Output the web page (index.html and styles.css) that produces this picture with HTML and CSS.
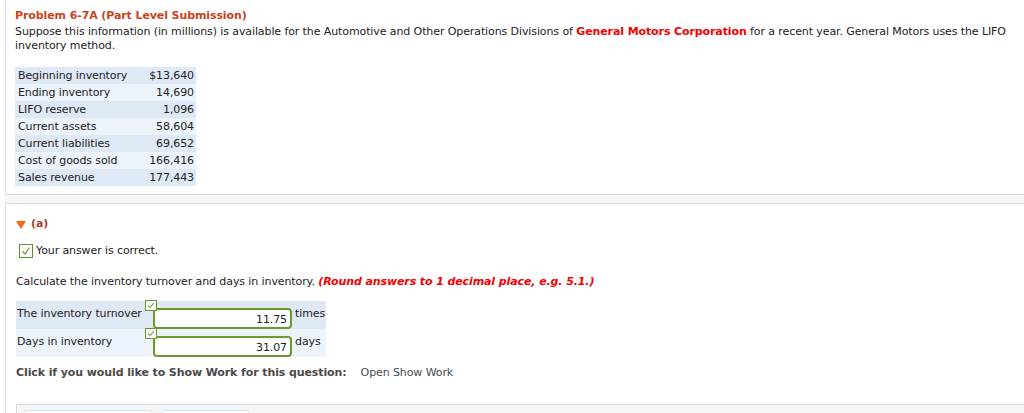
FILE: index.html
```html
<!DOCTYPE html>
<html>
<head>
<meta charset="utf-8">
<link rel="stylesheet" href="styles.css">
</head>
<body>
<div class="page">
  <section class="card card-top">
    <h1 class="title">Problem 6-7A (Part Level Submission)</h1>
    <p class="intro">Suppose this information (in millions) is available for the Automotive and Other Operations Divisions of <span class="company">General Motors Corporation</span> for a recent year. General Motors uses the LIFO inventory method.</p>
    <table class="data">
      <tr><td>Beginning inventory</td><td class="num">$13,640</td></tr>
      <tr><td>Ending inventory</td><td class="num">14,690</td></tr>
      <tr><td>LIFO reserve</td><td class="num">1,096</td></tr>
      <tr><td>Current assets</td><td class="num">58,604</td></tr>
      <tr><td>Current liabilities</td><td class="num">69,652</td></tr>
      <tr><td>Cost of goods sold</td><td class="num">166,416</td></tr>
      <tr><td>Sales revenue</td><td class="num">177,443</td></tr>
    </table>
  </section>
  <div class="gap"></div>
  <section class="card card-part">
    <div class="part-head"><span class="tri"></span><span class="part-label">(a)</span></div>
    <div class="correct">
      <svg class="checkbox" width="14" height="14" viewBox="0 0 14 14"><rect x="0.5" y="0.5" width="13" height="13" fill="#fff" stroke="#5e8f2b"/><path d="M3.5 7.2 L6 10 L10.5 3.5" fill="none" stroke="#6aa32e" stroke-width="1.3"/></svg>
      <span>Your answer is correct.</span>
    </div>
    <p class="question">Calculate the inventory turnover and days in inventory. <em class="hint">(Round answers to 1 decimal place, e.g. 5.1.)</em></p>
    <table class="answers">
      <tr class="row-a">
        <td class="lbl">The inventory turnover</td>
        <td class="field">
          <div class="field-wrap">
            <svg class="mini-check" width="12" height="11" viewBox="0 0 12 11"><rect x="0.5" y="0.5" width="11" height="10" fill="#fff" stroke="#6a9a2a"/><path d="M3 5.5 L5 7.5 L9 3" fill="none" stroke="#7cb342" stroke-width="1.2"/></svg>
            <div class="input">11.75</div>
          </div>
        </td>
        <td class="unit">times</td>
      </tr>
      <tr class="row-b">
        <td class="lbl">Days in inventory</td>
        <td class="field">
          <div class="field-wrap">
            <svg class="mini-check" width="12" height="11" viewBox="0 0 12 11"><rect x="0.5" y="0.5" width="11" height="10" fill="#fff" stroke="#6a9a2a"/><path d="M3 5.5 L5 7.5 L9 3" fill="none" stroke="#7cb342" stroke-width="1.2"/></svg>
            <div class="input">31.07</div>
          </div>
        </td>
        <td class="unit">days</td>
      </tr>
    </table>
    <div class="showwork"><strong>Click if you would like to Show Work for this question:</strong><span class="open">Open Show Work</span></div>
    <div class="bottom-box">
      <span class="btn btn-wide"></span><span class="btn btn-narrow"></span>
    </div>
  </section>
</div>
</body>
</html>
```
FILE: styles.css
```css
* { box-sizing: border-box; }
html, body { margin: 0; padding: 0; background: #fff; }
body {
  font-family: "DejaVu Sans", Verdana, sans-serif;
  font-size: 11px;
  line-height: 14px;
  letter-spacing: -0.1px;
  color: #222;
}
.page { padding-left: 5px; width: 1030px; }
.card { border-left: 1px solid #d8e0e9; background: #fff; }
.card-top { padding: 9px 10px 8px 9px; border-bottom: 1px solid #d3dce6; }
.title { margin: 0; font-size: 11px; line-height: 14px; font-weight: bold; color: #c9431c; }
.intro { margin: 2px 0 0; width: 1008px; }
.company { color: #f40000; font-weight: bold; }
.data { border-collapse: collapse; margin-top: 14px; width: 181px; }
.data td { height: 17px; padding: 0 3px; line-height: 17px; white-space: nowrap; }
.data tr:nth-child(odd) { background: #dfe8f5; }
.data tr:nth-child(even) { background: #edf3fb; }
.data .num { text-align: right; padding-right: 2px; }
.gap { height: 8px; background: #f4f7fa; }
.card-part { border-top: 1px solid #d3dce6; padding: 10px 0 0 10px; }
.part-head { display: flex; align-items: center; height: 14px; margin-top: 3px; }
.tri { width: 0; height: 0; border-left: 5px solid transparent; border-right: 5px solid transparent; border-top: 8px solid #f76a0c; margin-right: 5px; margin-top: 1px; }
.part-label { color: #b23c2c; font-weight: bold; }
.correct { display: flex; align-items: center; margin-top: 13px; margin-left: 3px; height: 14px; }
.checkbox { margin-right: 3px; display: block; }
.question { margin: 17px 0 0; }
.hint { color: #f40000; font-weight: bold; }
.answers { border-collapse: collapse; margin-top: 12px; width: 310px; }
.answers td { padding: 0; height: 27px; vertical-align: top; }
.row-a { background: #dfe8f5; }
.row-b { background: #edf3fb; }
.lbl { padding-left: 1px !important; padding-top: 6px !important; width: 129px; white-space: nowrap; }
.field { width: 143px; }
.field-wrap { position: relative; padding: 7px 0 0 8px; }
.mini-check { position: absolute; left: 0; top: -1px; display: block; }
.input {
  width: 139px; height: 21px; border: 2px solid #6a9a2a; border-radius: 4px;
  background: #fff; text-align: right; padding: 3px 3px 0 0; line-height: 14px; color: #222;
}
.unit { padding-left: 3px !important; padding-top: 6px !important; }
.showwork { margin-top: 9px; color: #4a4a4a; display: flex; }
.showwork strong { font-weight: bold; }
.open { margin-left: 14px; }
.bottom-box { margin-top: 24px; margin-left: 0; height: 20px; border-top: 1px solid #d3dce6; border-left: 1px solid #d3dce6; background: #f4f7fa; padding: 5px 0 0 6px; display: flex; gap: 8px; }
.btn { display: block; height: 20px; background: #fff; border: 1px solid #d8dfe7; border-radius: 4px 4px 0 0; }
.btn-wide { width: 130px; }
.btn-narrow { width: 89px; }
```
